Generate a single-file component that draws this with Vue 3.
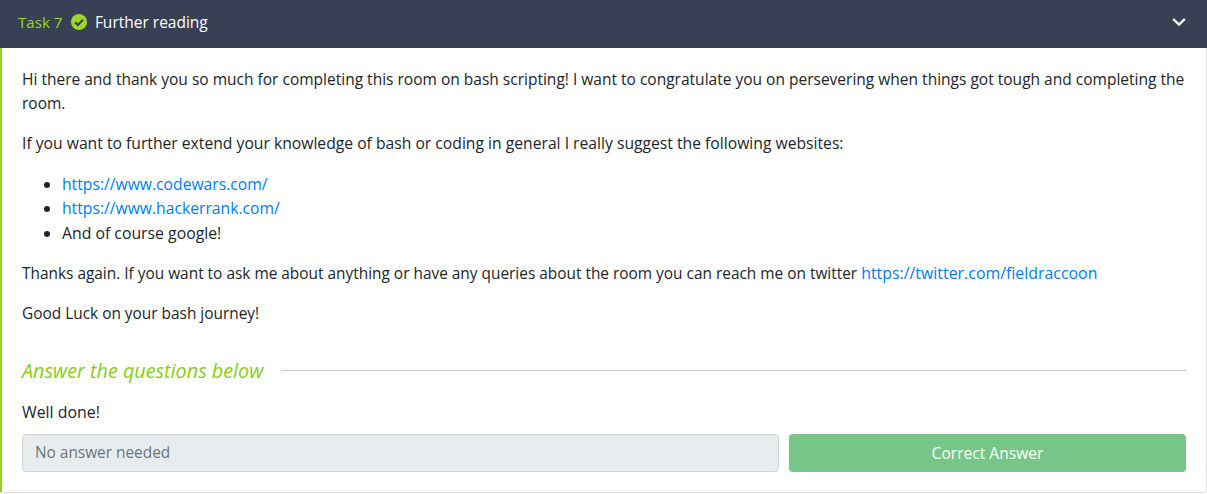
<script setup>
const links = [
  { href: 'https://www.codewars.com/', text: 'https://www.codewars.com/' },
  { href: 'https://www.hackerrank.com/', text: 'https://www.hackerrank.com/' }
]
</script>

<template>
  <div class="card">
    <header class="head">
      <div class="title">
        <span class="task">Task 7</span>
        <svg class="check" viewBox="0 0 16 16" width="16" height="16" aria-hidden="true">
          <circle cx="8" cy="8" r="8" fill="#9ed62c" />
          <path d="M4.1 8.3 6.8 11 12 5.8" fill="none" stroke="#374054" stroke-width="2.1" />
        </svg>
        <span class="name">Further reading</span>
      </div>
      <svg class="chev" viewBox="0 0 14 10" width="14" height="10" aria-hidden="true">
        <path d="M1.2 2 7 7.6 12.8 2" fill="none" stroke="#fff" stroke-width="2.4" />
      </svg>
    </header>
    <section class="body">
      <p>Hi there and thank you so much for completing this room on bash scripting! I want to congratulate you on persevering when things got tough and completing the room.</p>
      <p class="wide">If you want to further extend your knowledge of bash or coding in general I really suggest the following websites:</p>
      <ul>
        <li v-for="l in links" :key="l.href"><a :href="l.href">{{ l.text }}</a></li>
        <li class="plain">And of course google!</li>
      </ul>
      <p class="thanks">Thanks again. If you want to ask me about anything or have any queries about the room you can reach me on twitter <a href="https://twitter.com/fieldraccoon">https://twitter.com/fieldraccoon</a></p>
      <p class="thanks">Good Luck on your bash journey!</p>
      <div class="divider">
        <h5>Answer the questions below</h5>
        <span class="rule"></span>
      </div>
      <p class="q">Well done!</p>
      <div class="row">
        <input class="answer" disabled placeholder="No answer needed" />
        <button class="submit" disabled>Correct Answer</button>
      </div>
    </section>
  </div>
</template>

<style>
html, body { margin: 0; background: #fff; }
</style>

<style scoped>
.card {
  width: 1207px;
  height: 493px;
  box-sizing: border-box;
  font-family: "Open Sans", "Noto Sans", sans-serif;
  font-size: 15.52px;
  line-height: 24px;
  color: #212529;
  border-right: 1px solid #dfdfdf;
  border-bottom: 1px solid #dfdfdf;
  border-bottom-right-radius: 4px;
}
.head {
  height: 48px;
  box-sizing: border-box;
  background: #374054;
  display: flex;
  align-items: center;
  justify-content: space-between;
  padding: 0 21px 4px 18px;
  margin-right: -1px;
}
.title { display: flex; align-items: center; font-size: 15.5px; }
.task { color: #9ed62c; font-size: 15.1px; }
.check { margin: 0 7.5px 0 9px; }
.name { color: #fff; }
.body {
  border-left: 2px solid #91d51f;
  padding: 19px 20px 0 20px;
  height: 444px;
  box-sizing: border-box;
}
p { margin: 0 0 16px; }
.wide { font-size: 15.7px; }
.thanks { font-size: 15.41px; }
ul { margin: 16.6px 0 15.6px; padding-left: 40px; line-height: 24.5px; font-size: 15.7px; }
.plain { font-size: 15.8px; }
a { color: #007bff; text-decoration: none; }
.thanks a { font-size: 15.9px; }
.divider { display: flex; align-items: center; margin-top: 33px; }
h5 {
  margin: 0;
  font-size: 19.8px;
  font-weight: 400;
  font-style: italic;
  color: #88cc14;
  line-height: 24px;
}
.rule { flex: 1; height: 1px; background: #c8c8c8; margin-left: 18px; }
.q { margin: 17px 0 10px; font-size: 15.9px; }
.row { display: flex; gap: 10px; }
.answer {
  flex: 1 1 0;
  min-width: 0;
  height: 38px;
  box-sizing: border-box;
  padding: 0 12px;
  font: inherit;
  font-size: 15.4px;
  background: #e9ecef;
  border: 1px solid #ced4da;
  border-radius: 4px;
}
.answer::placeholder { color: #6c757d; opacity: 1; }
.submit {
  flex: 0 0 397px;
  height: 38px;
  font: inherit;
  font-size: 15.6px;
  color: #fff;
  background: #75c687;
  border: 0;
  border-radius: 4px;
}
</style>
